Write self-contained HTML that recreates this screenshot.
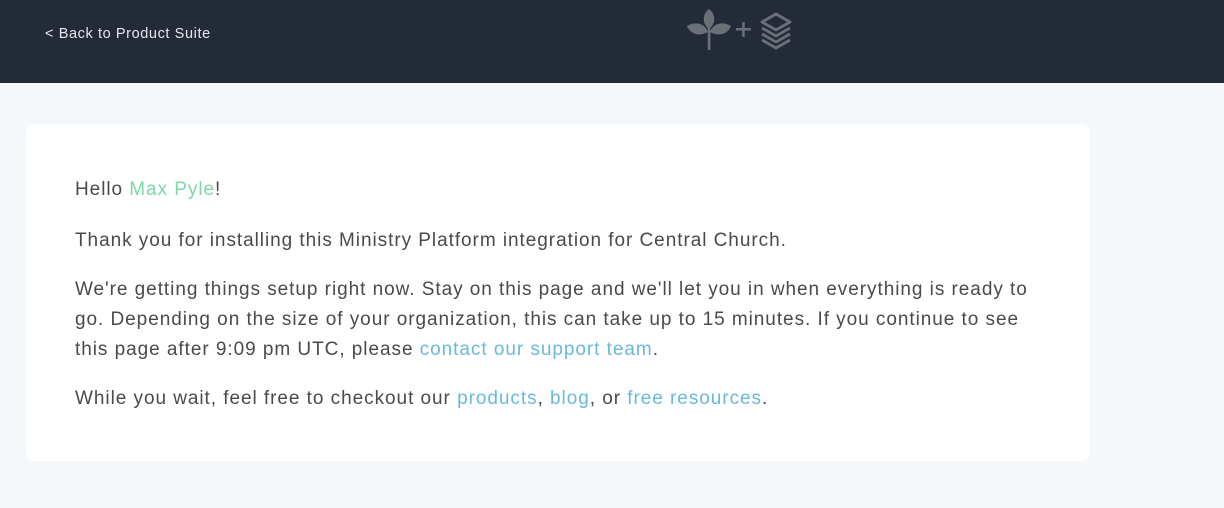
<!DOCTYPE html>
<html><head><meta charset="utf-8"><style>
body{margin:0;width:1224px;height:508px;background:#f5f8fa;font-family:"Liberation Sans",sans-serif;overflow:hidden}
.hd{height:83px;background:#232a38;position:relative}
.back{position:absolute;left:45px;top:26px;color:#e6e8ec;font-size:14.5px;letter-spacing:0.6px}
.logo{position:absolute;left:686px;top:8px}
.card{position:absolute;left:26px;top:124px;width:1064px;height:337px;background:#fff;border-radius:8px}
.card p{margin:0;position:absolute;left:49px;width:975px;font-size:19px;letter-spacing:0.95px;line-height:30px;color:#4a4a4a}
.g{color:#7dd8a6}.b{color:#6ab8de}
</style></head><body>
<div class="hd"><div class="back">&lt; Back to Product Suite</div>
<svg class="logo" width="108" height="44" viewBox="0 0 108 44">
<g fill="#6b6f78">
<path d="M23 1c7 5 7 15 0 20c-7-5-7-15 0-20z"/>
<path d="M1 18c8-5 18-3 21 6c-9 5-18 2-21-6z"/>
<path d="M45 18c-8-5-18-3-21 6c9 5 18 2 21-6z"/>
<rect x="21.8" y="20" width="2.6" height="22"/>
<rect x="50" y="20" width="15" height="2.5"/><rect x="56.2" y="14" width="2.5" height="15"/>
</g>
<g fill="none" stroke="#6b6f78" stroke-width="2.8" stroke-linejoin="round">
<path d="M76 14l14-8l14 8l-14 8z"/>
<path d="M76 20l14 8l14-8"/><path d="M76 26l14 8l14-8"/><path d="M76 32l14 8l14-8"/>
</g></svg></div>
<div class="card">
<p style="top:51px">Hello <span class="g">Max Pyle</span>!</p>
<p style="top:102px">Thank you for installing this Ministry Platform integration for Central Church.</p>
<p style="top:151px">We're getting things setup right now. Stay on this page and we'll let you in when everything is ready to go. Depending on the size of your organization, this can take up to 15 minutes. If you continue to see this page after 9:09 pm UTC, please <span class="b">contact our support team</span>.</p>
<p style="top:260px">While you wait, feel free to checkout our <span class="b">products</span>, <span class="b">blog</span>, or <span class="b">free resources</span>.</p>
</div>
</body></html>
